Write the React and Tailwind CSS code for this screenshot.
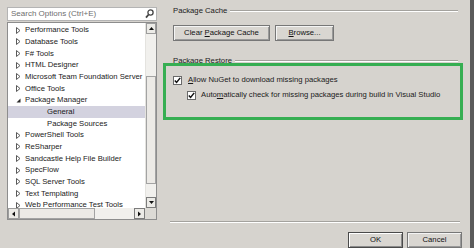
import React from 'react'

const tree = [
  { label: 'Performance Tools', kind: 'closed' },
  { label: 'Database Tools', kind: 'closed' },
  { label: 'F# Tools', kind: 'closed' },
  { label: 'HTML Designer', kind: 'closed' },
  { label: 'Microsoft Team Foundation Server', kind: 'closed' },
  { label: 'Office Tools', kind: 'closed' },
  { label: 'Package Manager', kind: 'open' },
  { label: 'General', kind: 'leaf', selected: true },
  { label: 'Package Sources', kind: 'leaf' },
  { label: 'PowerShell Tools', kind: 'closed' },
  { label: 'ReSharper', kind: 'closed' },
  { label: 'Sandcastle Help File Builder', kind: 'closed' },
  { label: 'SpecFlow', kind: 'closed' },
  { label: 'SQL Server Tools', kind: 'closed' },
  { label: 'Text Templating', kind: 'closed' },
  { label: 'Web Performance Test Tools', kind: 'closed' },
]

function Expander({ kind }) {
  if (kind === 'leaf') return <span className="w-[4px] shrink-0" />
  if (kind === 'open')
    return (
      <svg width="5" height="7" viewBox="0 0 5 7" className="shrink-0">
        <path d="M4.5 1.5 L4.5 5.5 L0.5 5.5 Z" fill="#2a2a2a" />
      </svg>
    )
  return (
    <svg width="5" height="7" viewBox="0 0 5 7" className="shrink-0">
      <path d="M0.5 0.5 L4 3.5 L0.5 6.5 Z" fill="none" stroke="#5a5a5a" strokeWidth="1" />
    </svg>
  )
}

function Arrow({ dir }) {
  const d = {
    up: 'M1 4 L3.5 1 L6 4 Z',
    down: 'M1 1 L3.5 4 L6 1 Z',
    left: 'M4 0.5 L1 3 L4 5.5 Z',
    right: 'M1 0.5 L4 3 L1 5.5 Z',
  }[dir]
  const vertical = dir === 'up' || dir === 'down'
  return (
    <svg width={vertical ? 7 : 5} height={vertical ? 5 : 6} viewBox={vertical ? '0 0 7 5' : '0 0 5 6'}>
      <path d={d} fill="#111" />
    </svg>
  )
}

function Check() {
  return (
    <span className="w-[9px] h-[9px] shrink-0 bg-white border border-[#6a6a6a] flex items-center justify-center">
      <svg width="7" height="7" viewBox="0 0 7 7">
        <path d="M0.8 3.4 L2.6 5.4 L6.2 0.9" fill="none" stroke="#111" strokeWidth="1.5" />
      </svg>
    </span>
  )
}

function Btn({ children, width, strong }) {
  return (
    <div
      className={`h-[16px] flex items-center justify-center bg-[#d9d6d1] text-[#111] ${width} ${
        strong
          ? 'border border-[#4a4a4a] shadow-[inset_1px_1px_0_#ffffff,inset_-1px_-1px_0_#8a8a8a]'
          : 'border border-[#777] shadow-[inset_1px_1px_0_#f4f4f4,inset_-1px_-1px_0_#9a9a9a]'
      }`}
    >
      {children}
    </div>
  )
}

export default function App() {
  return (
    <div
      className="w-[474px] h-[248px] bg-[#d6d3ce] flex overflow-hidden text-[7.7px] leading-[10px] text-[#1a1a1a]"
      style={{ fontFamily: '"Liberation Sans", Arial, sans-serif' }}
    >
      {/* Left: search + tree */}
      <div className="w-[160px] shrink-0 pl-[7px] pt-[7px] flex flex-col">
        <div className="w-[150px] h-[14px] bg-white border border-[#b4b4b4] flex items-center justify-between pl-[3px] pr-[2px]">
          <span className="text-[#6e6e6e] text-[8px]">Search Options (Ctrl+E)</span>
          <svg width="9" height="10" viewBox="0 0 9 10">
            <circle cx="5.5" cy="3.5" r="2.6" fill="none" stroke="#444" strokeWidth="1.3" />
            <path d="M3.6 5.5 L1 8.6" stroke="#444" strokeWidth="1.8" />
          </svg>
        </div>

        <div className="mt-[1px] w-[150px] h-[198px] bg-white border border-[#8d8d8d] flex flex-col">
          <div className="flex flex-1 min-h-0">
            <div className="flex-1 min-w-0 overflow-hidden pt-[1.5px]">
              {tree.map((t) => (
                <div
                  key={t.label}
                  className={`h-[11.67px] flex items-center whitespace-nowrap pl-[8px] ${t.selected ? 'bg-[#d3d2df]' : ''}`}
                >
                  <Expander kind={t.kind} />
                  <span className={t.kind === 'leaf' ? 'ml-[27px]' : 'ml-[4px]'}>{t.label}</span>
                </div>
              ))}
            </div>
            {/* vertical scrollbar */}
            <div className="w-[11px] shrink-0 bg-[#f1f0ed] flex flex-col border-l border-[#e4e3df]">
              <div className="h-[11px] flex items-center justify-center bg-[#ecebe7] border border-[#9d9d9d]">
                <Arrow dir="up" />
              </div>
              <div className="h-[42px]" />
              <div className="h-[108px] bg-[#eceae6] border border-[#a3a3a3]" />
              <div className="flex-1" />
              <div className="h-[11px] flex items-center justify-center bg-[#ecebe7] border border-[#7c7c7c]">
                <Arrow dir="down" />
              </div>
            </div>
          </div>
          {/* horizontal scrollbar */}
          <div className="h-[11px] shrink-0 flex bg-[#f1f0ed]">
            <div className="w-[11px] flex items-center justify-center bg-[#ecebe7] border border-[#9d9d9d]">
              <Arrow dir="left" />
            </div>
            <div className="w-[76px] bg-[#eceae6] border border-[#a3a3a3]" />
            <div className="flex-1" />
            <div className="w-[11px] flex items-center justify-center bg-[#ecebe7] border border-[#7c7c7c]">
              <Arrow dir="right" />
            </div>
            <div className="w-[11px] bg-[#dcdad5]" />
          </div>
        </div>
      </div>

      {/* Right: options page */}
      <div className="flex-1 flex flex-col">
        <div className="mt-[6px] pl-[13px] pr-[12px] flex items-center gap-[3px]">
          <span>Package Cache</span>
          <div className="flex-1 h-[2px] border-t border-[#a4a29e] border-b-white border-b" />
        </div>

        <div className="mt-[9px] pl-[13px] flex gap-[5px]">
          <Btn width="w-[97px]">
            <span>
              Clear <span className="underline">P</span>ackage Cache
            </span>
          </Btn>
          <Btn width="w-[59px]">
            <span>
              <span className="underline">B</span>rowse...
            </span>
          </Btn>
        </div>

        <div className="mt-[15px] pl-[13px] pr-[12px] flex items-center gap-[3px]">
          <span>Package Restore</span>
          <div className="flex-1 h-[2px] border-t border-[#a4a29e] border-b-white border-b" />
        </div>

        <div className="-mt-[3px] ml-[3px] w-[300px] h-[57px] border-[3px] border-[#36ae52] pt-[9px] pl-[7px]">
          <div className="flex items-center gap-[6px]">
            <Check />
            <span>
              <span className="underline">A</span>llow NuGet to download missing packages
            </span>
          </div>
          <div className="mt-[5px] ml-[14px] flex items-center gap-[5px]">
            <Check />
            <span>
              Auto<span className="underline">m</span>atically check for missing packages during build in Visual Studio
            </span>
          </div>
        </div>

        <div className="mt-[101px] ml-[10px] mr-[10px] h-[2px] border-t border-[#a4a29e] border-b border-b-white" />

        <div className="mt-[9px] flex justify-end gap-[4px] pr-[8px]">
          <Btn width="w-[55px]" strong>
            OK
          </Btn>
          <Btn width="w-[55px]">Cancel</Btn>
        </div>
      </div>

      <div className="w-[4px] shrink-0 bg-[#5b5b5b]" />
    </div>
  )
}
